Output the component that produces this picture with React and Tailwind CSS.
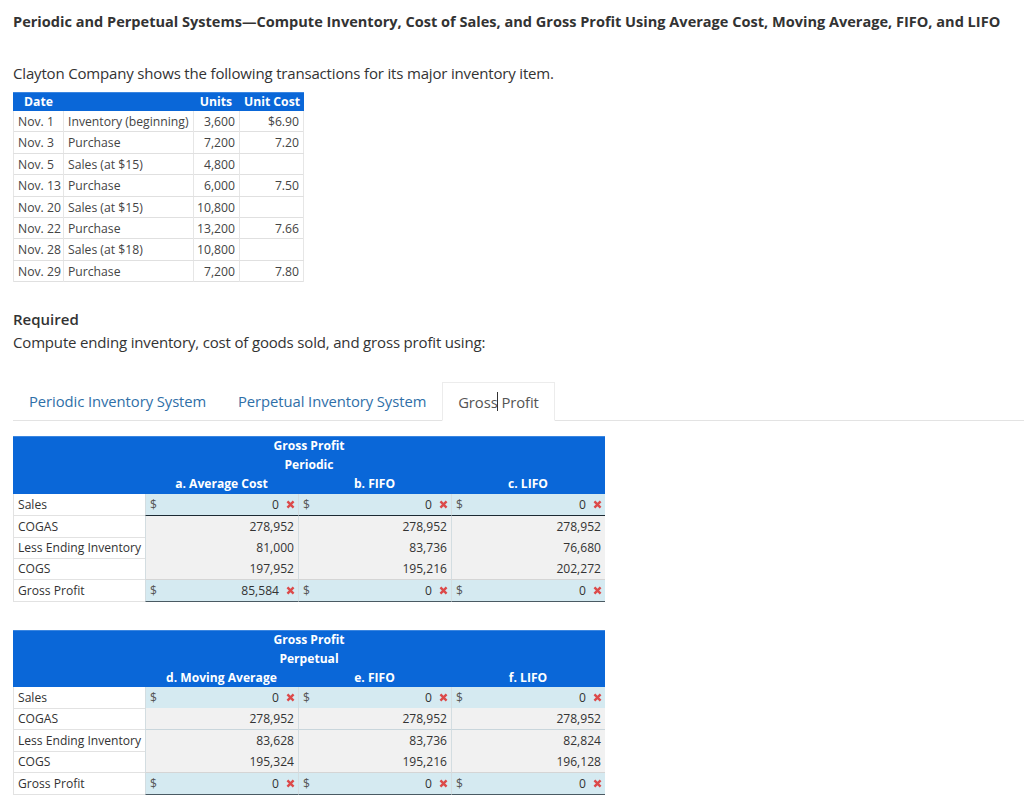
const purchases = [
  ['Nov. 1', 'Inventory (beginning)', '3,600', '$6.90'],
  ['Nov. 3', 'Purchase', '7,200', '7.20'],
  ['Nov. 5', 'Sales (at $15)', '4,800', ''],
  ['Nov. 13', 'Purchase', '6,000', '7.50'],
  ['Nov. 20', 'Sales (at $15)', '10,800', ''],
  ['Nov. 22', 'Purchase', '13,200', '7.66'],
  ['Nov. 28', 'Sales (at $18)', '10,800', ''],
  ['Nov. 29', 'Purchase', '7,200', '7.80'],
];

const periodic = {
  subtitle: 'Periodic',
  headerHeight: 'h-[58px]',
  heads: ['a. Average Cost', 'b. FIFO', 'c. LIFO'],
  rows: [
    ['Sales', ['0', '0', '0'], true, 'border-b-[#1c2a33]'],
    ['COGAS', ['278,952', '278,952', '278,952'], false, 'border-b-[#c9d6dc]'],
    ['Less Ending Inventory', ['81,000', '83,736', '76,680'], false, 'border-b-[#1c2a33]'],
    ['COGS', ['197,952', '195,216', '202,272'], false, 'border-b-[#d5d5d5]'],
    ['Gross Profit', ['85,584', '0', '0'], true, 'border-b-[#4a5a63]'],
  ],
};

const perpetual = {
  subtitle: 'Perpetual',
  headerHeight: 'h-[57px]',
  heads: ['d. Moving Average', 'e. FIFO', 'f. LIFO'],
  rows: [
    ['Sales', ['0', '0', '0'], true, 'border-b-[#6d7f88]'],
    ['COGAS', ['278,952', '278,952', '278,952'], false, 'border-b-[#c9d6dc]'],
    ['Less Ending Inventory', ['83,628', '83,736', '82,824'], false, 'border-b-[#1c2a33]'],
    ['COGS', ['195,324', '195,216', '196,128'], false, 'border-b-[#d5d5d5]'],
    ['Gross Profit', ['0', '0', '0'], true, 'border-b-[#4a5a63]'],
  ],
};

const XMark = () => (
  <svg viewBox="0 0 10 10" className="ml-[7px] mr-[-1px] h-[9px] w-[9px] shrink-0">
    <path d="M1.6 1.6 L8.4 8.4 M8.4 1.6 L1.6 8.4" stroke="#dc4a4a" strokeWidth="2.7" />
  </svg>
);

const ProfitTable = ({ data }) => (
  <div className="w-[592px] text-[12.1px] text-[#333]">
    <div className={`${data.headerHeight} border-t border-t-[#3b86e0] bg-[#0a67d8] font-bold leading-[19px] text-white`}>
      <div className="mt-[-1px] text-center">Gross Profit</div>
      <div className="text-center">{data.subtitle}</div>
      <div className="grid grid-cols-[132px_153px_153px_154px]">
        <div />
        {data.heads.map((head) => (
          <div key={head} className="text-center">{head}</div>
        ))}
      </div>
    </div>
    {data.rows.map(([label, values, money, line]) => (
      <div key={label} className="grid h-[21.4px] grid-cols-[132px_153px_153px_154px] leading-[21px]">
        <div className="border-b border-l border-[#e2e2e2] pl-[4px] whitespace-nowrap">{label}</div>
        {values.map((value, i) => (
          <div
            key={i}
            className={`flex items-center justify-between border-b border-l border-[#d3dde1] px-[4px] ${line} ${money ? 'bg-[#d5eaf1]' : 'bg-[#f1f1f1]'}`}
          >
            <span className="text-[#555]">{money ? '$' : ''}</span>
            <span className="flex items-center">
              {value}
              {money && <XMark />}
            </span>
          </div>
        ))}
      </div>
    ))}
  </div>
);

export default function App() {
  return (
    <div className="h-[810px] w-[1024px] overflow-hidden bg-white text-[#333] font-['Open_Sans',sans-serif]">
      <h1 className="pl-[13px] pt-[11px] text-[14.55px] font-bold leading-[20px] whitespace-nowrap">
        Periodic and Perpetual Systems—Compute Inventory, Cost of Sales, and Gross Profit Using Average Cost, Moving Average, FIFO, and LIFO
      </h1>

      <p className="mt-[31px] pl-[13px] text-[15px] leading-[22px] tracking-[-0.17px]">
        Clayton Company shows the following transactions for its major inventory item.
      </p>

      <div className="ml-[13px] mt-[8px] w-[291px] text-[12.2px]">
        <div className="grid h-[19px] grid-cols-[172px_47px_72px] items-center border-t border-t-[#3b86e0] bg-[#0a67d8] font-bold leading-[18px] text-white">
          <div className="pl-[11px]">Date</div>
          <div className="text-right">Units</div>
          <div className="pr-[4px] text-right">Unit Cost</div>
        </div>
        {purchases.map(([date, what, units, cost]) => (
          <div key={date} className="grid h-[21.4px] grid-cols-[50px_130px_46px_65px] border-b border-[#e0e0e0] leading-[21px] text-[#444]">
            <div className="border-l border-[#e6e6e6] pl-[4px]">{date}</div>
            <div className="border-l border-[#e6e6e6] pl-[4px] whitespace-nowrap">{what}</div>
            <div className="border-l border-[#e6e6e6] pr-[4px] text-right">{units}</div>
            <div className="border-l border-r border-[#e6e6e6] pr-[4px] text-right">{cost}</div>
          </div>
        ))}
      </div>

      <p className="mt-[26px] pl-[13px] text-[15px] font-semibold leading-[22px]">Required</p>
      <p className="mt-[1px] pl-[13px] text-[15px] leading-[22px] tracking-[-0.17px]">
        Compute ending inventory, cost of goods sold, and gross profit using:
      </p>

      <div className="ml-[13px] mt-[29px] flex h-[39px] items-stretch border-b border-[#e3e3e3] text-[14.8px] tracking-[-0.07px]">
        <div className="flex w-[209px] items-center pl-[16px] text-[#2f6fa8]">Periodic Inventory System</div>
        <div className="flex w-[220px] items-center pl-[16px] text-[#2f6fa8] whitespace-nowrap">Perpetual Inventory System</div>
        <div className="mb-[-1px] flex w-[113px] items-center justify-center border border-[#ececec] border-b-white bg-white text-[#555]">
          <span className="relative">
            Gross Profit
            <span className="absolute left-[39px] top-[1px] h-[19px] w-[1px] bg-[#333]" />
          </span>
        </div>
      </div>

      <div className="ml-[13px] mt-[15px]">
        <ProfitTable data={periodic} />
      </div>
      <div className="ml-[13px] mt-[29px]">
        <ProfitTable data={perpetual} />
      </div>
    </div>
  );
}
